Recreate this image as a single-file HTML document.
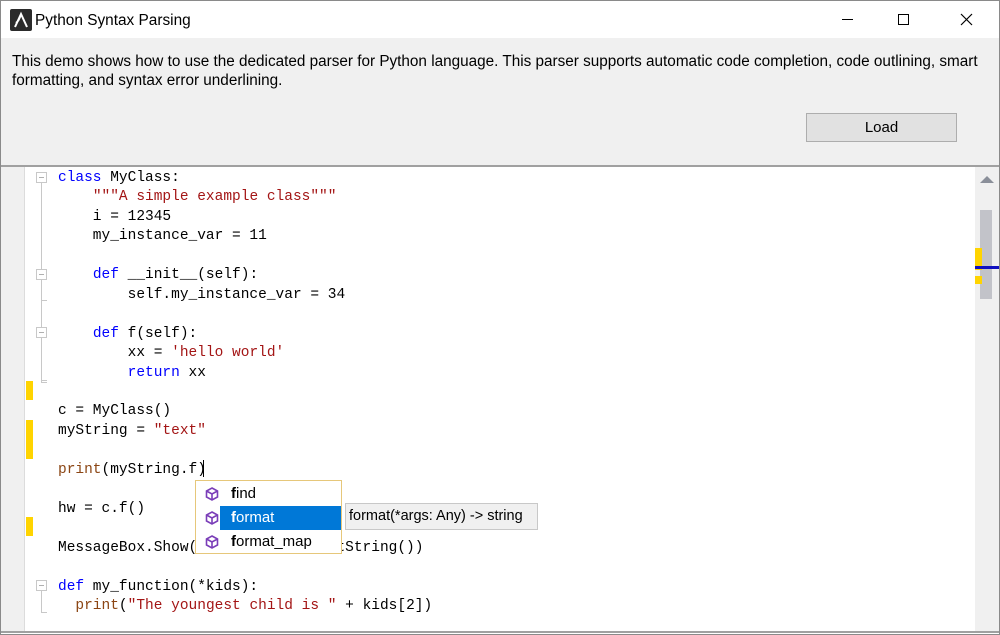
<!DOCTYPE html>
<html><head><style>
*{margin:0;padding:0;box-sizing:border-box}
body{width:1000px;height:635px;position:relative;overflow:hidden;background:#fff;font-family:"Liberation Sans",sans-serif}
.abs{position:absolute}
.code{position:absolute;left:58px;top:169px;font-family:"Liberation Mono",monospace;font-size:14.5px;line-height:19.45px;white-space:pre;color:#000}
.k{color:#0000ff}.s{color:#a31515}.p{color:#8b4513}
.fb{position:absolute;left:36px;width:11px;height:11px;border:1px solid #c8c8c8;background:#fff}
.fb:after{content:"";position:absolute;left:2px;top:4px;width:5px;height:1px;background:#b0b0b0}
.vl{position:absolute;left:41px;width:1px;background:#c8c8c8}
.tk{position:absolute;left:41px;width:6px;height:1px;background:#c8c8c8}
.y{position:absolute;left:26px;width:7px;background:#ffd400}
.it{position:absolute;left:1px;height:24px;width:144px;font-size:15px;line-height:24px}
.ic{position:absolute;left:8px;top:5px;width:14px;height:14px}
</style></head><body>
<div class="abs" style="left:0;top:0;width:1000px;height:635px;border:1px solid #8a8a8a"></div>
<div class="abs" style="left:10px;top:9px;width:22px;height:22px;background:#2b2b2b;border-radius:2px">
<svg width="22" height="22"><path d="M5 18 L11 5 L17 18 M11 5 Q9 12 6 14" stroke="#fff" stroke-width="2" fill="none"/></svg></div>
<div class="abs" style="left:35px;top:12px;font-size:15.4px;color:#000">Python Syntax Parsing</div>
<div class="abs" style="left:842px;top:19px;width:11px;height:1px;background:#000"></div>
<div class="abs" style="left:898px;top:14px;width:11px;height:11px;border:1px solid #000"></div>
<svg class="abs" style="left:960px;top:13px" width="13" height="13"><path d="M1 1L12 12M12 1L1 12" stroke="#000" stroke-width="1.2"/></svg>
<div class="abs" style="left:1px;top:38px;width:998px;height:128px;background:#f0f0f0"></div>
<div class="abs" style="left:12px;top:52px;font-size:15.3px;line-height:19px;color:#000;width:985px">This demo shows how to use the dedicated parser for Python language. This parser supports automatic code completion, code outlining, smart formatting, and syntax error underlining.</div>
<div class="abs" style="left:806px;top:113px;width:151px;height:29px;background:#e1e1e1;border:1px solid #adadad;font-size:15px;text-align:center;line-height:28px">Load</div>
<div class="abs" style="left:1px;top:165px;width:998px;height:2px;background:#a0a0a0"></div>
<div class="abs" style="left:1px;top:167px;width:23px;height:465px;background:#f0f0f0"></div>
<div class="abs" style="left:24px;top:167px;width:1px;height:465px;background:#dcdcdc"></div>
<div class="abs" style="left:1px;top:631px;width:998px;height:2px;background:#a0a0a0"></div>
<div class="abs" style="left:975px;top:167px;width:24px;height:464px;background:#f0f0f0"></div>
<svg class="abs" style="left:980px;top:176px" width="14" height="8"><path d="M0 7L7 0L14 7Z" fill="#8a8f99"/></svg>
<div class="abs" style="left:980px;top:210px;width:12px;height:89px;background:#c2c3c9"></div>
<div class="abs" style="left:975px;top:248px;width:7px;height:22px;background:#ffd400"></div>
<div class="abs" style="left:975px;top:276px;width:7px;height:8px;background:#ffd400"></div>
<div class="abs" style="left:975px;top:266px;width:24px;height:3px;background:#1010c0"></div>
<div class="y" style="top:381px;height:19px"></div>
<div class="y" style="top:420px;height:39px"></div>
<div class="y" style="top:517px;height:19px"></div>
<div class="vl" style="top:183px;height:200px"></div>
<div class="tk" style="top:382px"></div>
<div class="fb" style="top:172px"></div>
<div class="fb" style="top:269px"></div>
<div class="tk" style="top:300px"></div>
<div class="fb" style="top:327px"></div>
<div class="tk" style="top:380px"></div>
<div class="vl" style="top:590px;height:22px"></div>
<div class="tk" style="top:612px"></div>
<div class="fb" style="top:580px"></div>
<div class="code"><span class="k">class</span> MyClass:
    <span class="s">"""A simple example class"""</span>
    i = 12345
    my_instance_var = 11

    <span class="k">def</span> __init__(self):
        self.my_instance_var = 34

    <span class="k">def</span> f(self):
        xx = <span class="s">'hello world'</span>
        <span class="k">return</span> xx

c = MyClass()
myString = <span class="s">"text"</span>

<span class="p">print</span>(myString.f)

hw = c.f()

MessageBox.Show(hw + MyModule.GetString())

<span class="k">def</span> my_function(*kids):
  <span class="p">print</span>(<span class="s">"The youngest child is "</span> + kids[2])</div>
<div class="abs" style="left:203px;top:460px;width:1px;height:17px;background:#000"></div>
<div class="abs" style="left:195px;top:480px;width:147px;height:74px;background:#fff;border:1px solid #e6c77a">
 <div class="it" style="top:1px"><svg class="ic" viewBox="0 0 14 14"><path d="M7 1L12.5 4V10L7 13L1.5 10V4Z M1.5 4L7 7L12.5 4 M7 7V13" stroke="#7a3db8" stroke-width="1.6" fill="none"/></svg><span style="position:absolute;left:34px"><b>f</b>ind</span></div>
 <div class="it" style="top:25px"><svg class="ic" viewBox="0 0 14 14"><path d="M7 1L12.5 4V10L7 13L1.5 10V4Z M1.5 4L7 7L12.5 4 M7 7V13" stroke="#7a3db8" stroke-width="1.6" fill="none"/></svg><span style="position:absolute;left:23px;width:121px;height:24px;background:#0078d7;color:#fff;padding-left:11px"><b>f</b>ormat</span></div>
 <div class="it" style="top:49px"><svg class="ic" viewBox="0 0 14 14"><path d="M7 1L12.5 4V10L7 13L1.5 10V4Z M1.5 4L7 7L12.5 4 M7 7V13" stroke="#7a3db8" stroke-width="1.6" fill="none"/></svg><span style="position:absolute;left:34px"><b>f</b>ormat_map</span></div>
</div>
<div class="abs" style="left:345px;top:503px;width:193px;height:27px;background:#f0f0f0;border:1px solid #c8c8c8;font-size:14.5px;line-height:25px;padding-left:3px">format(*args: Any) -&gt; string</div>
</body></html>
